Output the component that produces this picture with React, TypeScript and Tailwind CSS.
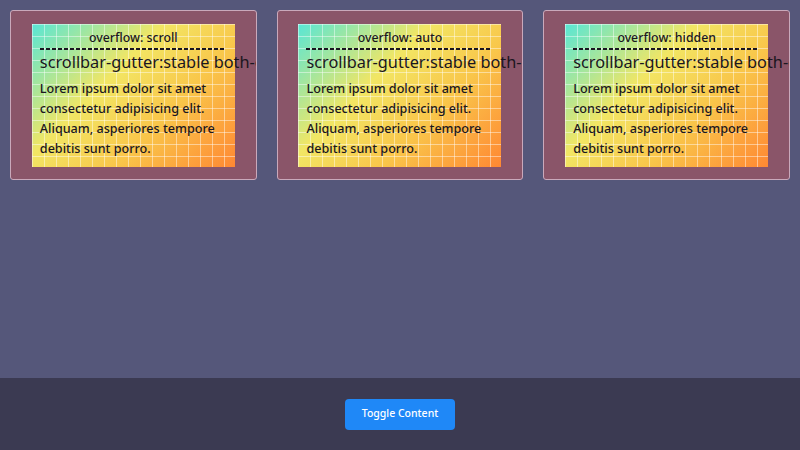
import React, { useState } from 'react';

const modes = ['scroll', 'auto', 'hidden'];

const Panel: React.FC<{ mode: string; show: boolean }> = ({ mode, show }) => (
    <div className="h-[170px] overflow-hidden rounded-[3px] border border-[#c9a9bb] bg-[#8a5569] flex items-center justify-center">
        <div className="w-[203px] h-[143px] bg-[linear-gradient(rgba(255,255,255,0.45)_1px,transparent_1px),linear-gradient(90deg,rgba(255,255,255,0.45)_1px,transparent_1px),linear-gradient(135deg,#58e6d6_0%,#f2e664_38%,#f9c64a_65%,#ff8833_100%)] bg-[length:12px_12px,12px_12px,100%_100%] px-2 pt-[6px] text-[#1a1620]">
            <h3 className="text-center text-[12.3px] leading-[16px] font-medium">overflow: {mode}</h3>
            <div className="mt-[2px] mr-[3px] h-[2px] bg-[repeating-linear-gradient(90deg,#1a1620_0px,#1a1620_4px,transparent_4px,transparent_6px)]" />
            {show && (
                <>
                    <p className="whitespace-nowrap text-[16.3px] leading-[22px] mt-[1px]">scrollbar-gutter:stable both-edges</p>
                    <p className="mt-[6px] text-[12.6px] leading-[20px] font-medium">
                        Lorem ipsum dolor sit amet consectetur adipisicing elit. Aliquam, asperiores tempore debitis sunt porro.
                    </p>
                </>
            )}
        </div>
    </div>
);

export default function App() {
    const [show, setShow] = useState(true);

    return (
        <div className="h-[450px] w-full flex flex-col bg-[#55577a] font-['Noto_Sans','Liberation_Sans',sans-serif]">
            <div className="flex-1 grid grid-cols-3 gap-5 p-[10px]">
                {modes.map((m) => (
                    <Panel key={m} mode={m} show={show} />
                ))}
            </div>
            <div className="h-[72px] bg-[#3b3a52] flex items-center justify-center">
                <button
                    onClick={() => setShow(!show)}
                    className="w-[110px] h-[31px] rounded-[4px] bg-[#1f88f7] text-white text-[10.5px] font-medium"
                >
                    Toggle Content
                </button>
            </div>
        </div>
    );
}
